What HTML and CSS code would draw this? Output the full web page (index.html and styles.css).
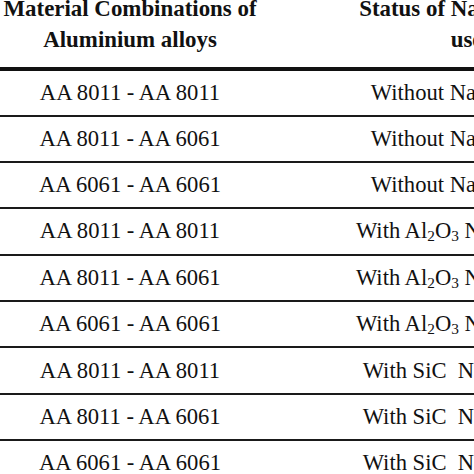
FILE: index.html
```html
<!DOCTYPE html>
<html>
<head>
<meta charset="utf-8">
<link rel="stylesheet" href="styles.css">
</head>
<body>
<div class="viewport">
<table class="tbl">
  <colgroup><col class="c1"><col class="c2"></colgroup>
  <thead>
    <tr class="head">
      <th>Material Combinations of<br>Aluminium alloys</th>
      <th>Status of Nanoparticles<br>used</th>
    </tr>
  </thead>
  <tbody>
    <tr><td>AA 8011 - AA 8011</td><td>Without Nanoparticles</td></tr>
    <tr><td>AA 8011 - AA 6061</td><td>Without Nanoparticles</td></tr>
    <tr><td>AA 6061 - AA 6061</td><td>Without Nanoparticles</td></tr>
    <tr><td>AA 8011 - AA 8011</td><td>With Al<sub>2</sub>O<sub>3</sub> Nanoparticles</td></tr>
    <tr><td>AA 8011 - AA 6061</td><td>With Al<sub>2</sub>O<sub>3</sub> Nanoparticles</td></tr>
    <tr><td>AA 6061 - AA 6061</td><td>With Al<sub>2</sub>O<sub>3</sub> Nanoparticles</td></tr>
    <tr><td>AA 8011 - AA 8011</td><td>With SiC&nbsp; Nanoparticles</td></tr>
    <tr><td>AA 8011 - AA 6061</td><td>With SiC&nbsp; Nanoparticles</td></tr>
    <tr><td>AA 6061 - AA 6061</td><td>With SiC&nbsp; Nanoparticles</td></tr>
  </tbody>
</table>
</div>
</body>
</html>
```
FILE: styles.css
```css
html, body {
  margin: 0;
  padding: 0;
  background: #fff;
  overflow: hidden;
}
.viewport {
  width: 474px;
  height: 474px;
  overflow: hidden;
}
.tbl {
  border-collapse: collapse;
  table-layout: fixed;
  width: 686px;
  margin-top: -7.4px;
  font-family: "Liberation Serif", "Times New Roman", serif;
  font-size: 22.6px;
  color: #111;
}
.c1 { width: 260px; }
.c2 { width: 426px; }
.tbl th, .tbl td {
  padding: 0;
  text-align: center;
  white-space: nowrap;
}
.head th {
  font-weight: bold;
  font-size: 22.9px;
  line-height: 31px;
  padding-bottom: 12px;
  vertical-align: top;
  border-bottom: 4px solid #111;
}
.tbl td {
  height: 44.35px;
  vertical-align: middle;
  border-bottom: 2.4px solid #1a1a1a;
  line-height: normal;
}
.tbl tbody tr:first-child td {
  height: 44px;
}
sub {
  font-size: 0.68em;
  vertical-align: -0.22em;
  line-height: 0;
}
```
